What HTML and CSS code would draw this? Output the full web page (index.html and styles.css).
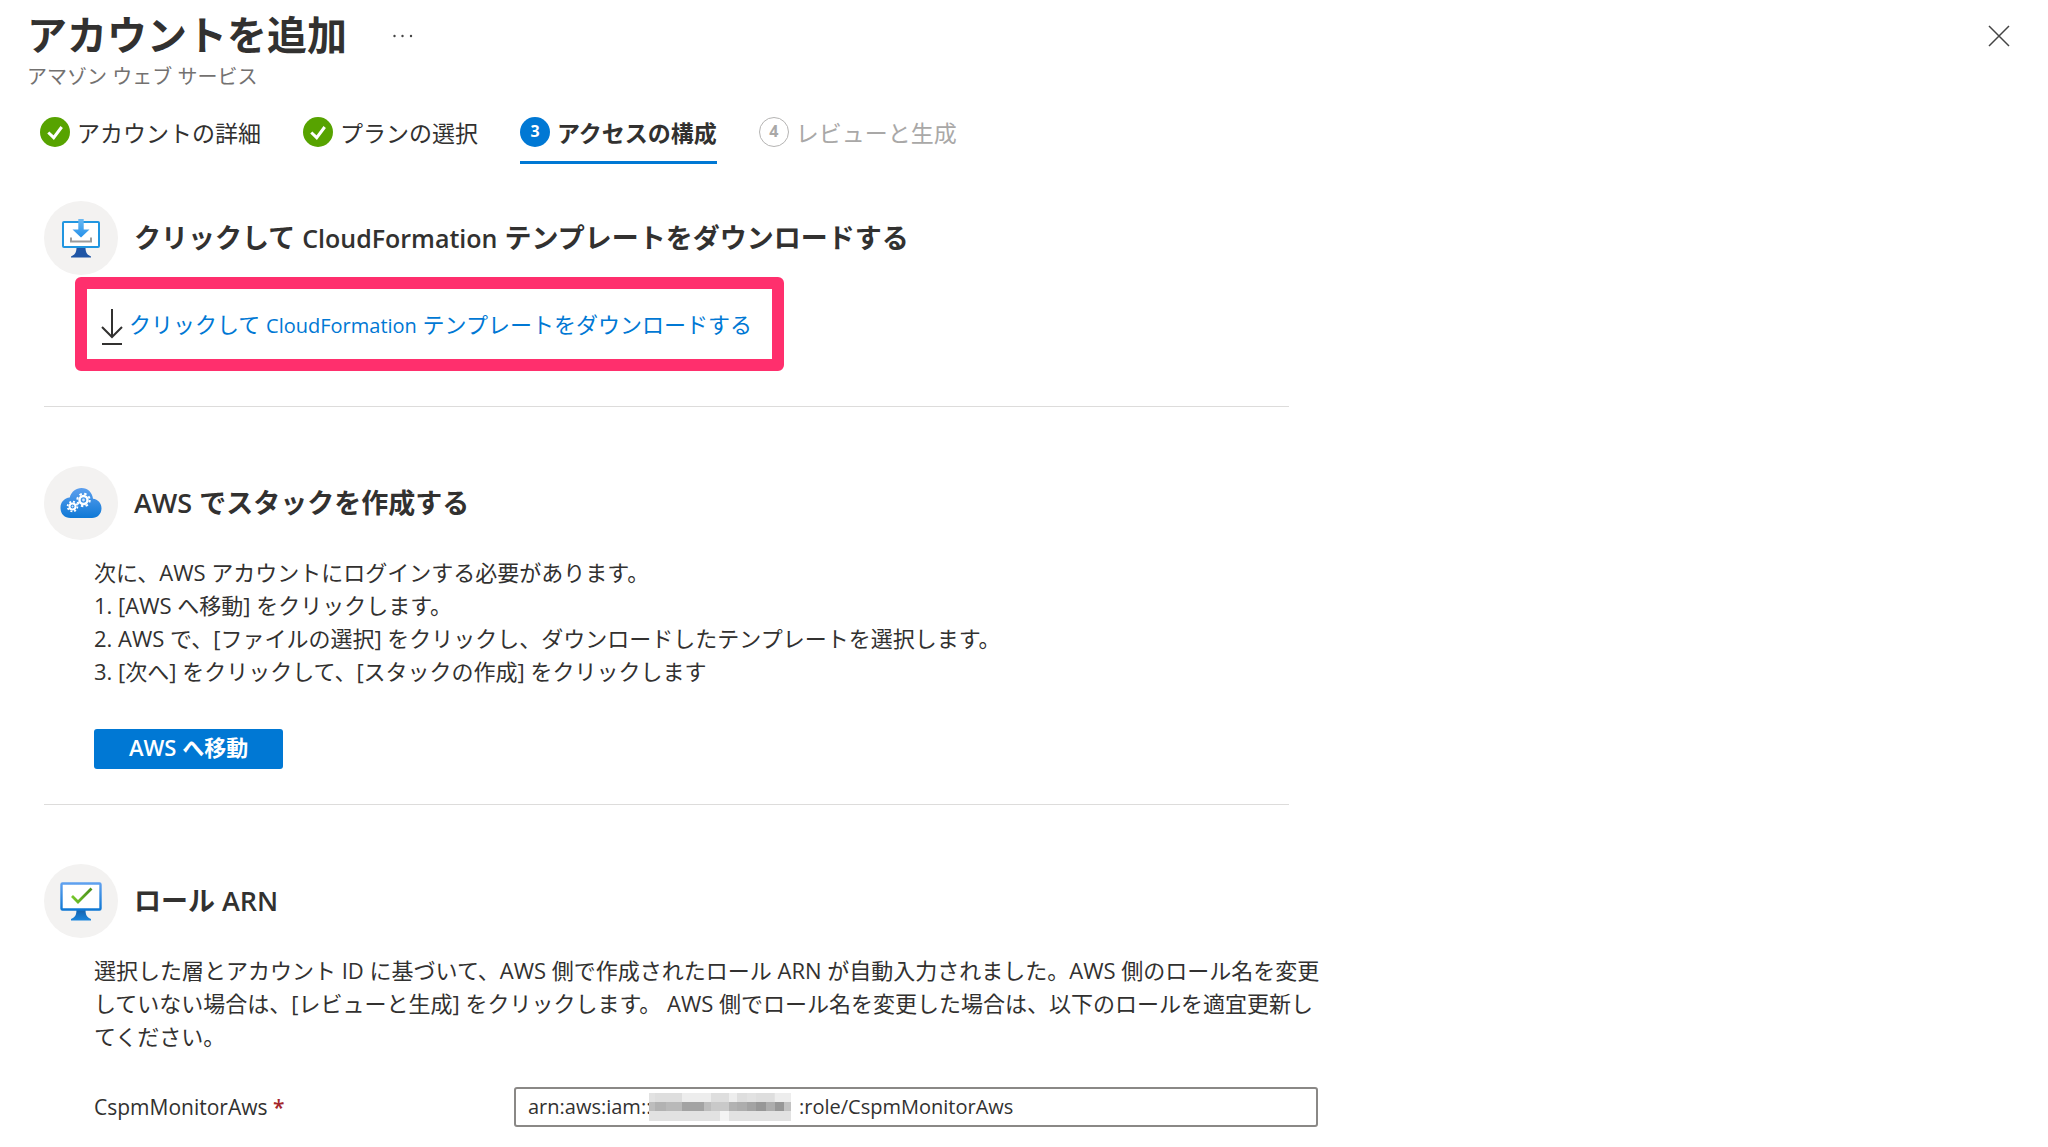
FILE: index.html
```html
<!DOCTYPE html>
<html lang="ja">
<head>
<meta charset="utf-8">
<meta name="viewport" content="width=device-width, initial-scale=1">
<title>アカウントを追加</title>
<link rel="stylesheet" href="styles.css">
</head>
<body>
<header class="blade-header">
  <div class="title-row">
    <h1 class="title">アカウントを追加</h1>
    <button class="icon-button" type="button" aria-label="その他">
      <svg width="20" height="4" viewBox="0 0 20 4" fill="#444"><circle cx="1.5" cy="2" r="1.2"/><circle cx="9.5" cy="2" r="1.2"/><circle cx="18" cy="2" r="1.2"/></svg>
    </button>
    <button class="icon-button close" type="button" aria-label="閉じる">
      <svg width="22" height="22" viewBox="0 0 22 22" stroke="#444" stroke-width="1.5"><path d="M1 1l20 20M21 1L1 21"/></svg>
    </button>
  </div>
  <p class="subtitle">アマゾン ウェブ サービス</p>
</header>

<nav class="steps">
  <a class="step" href="#details">
    <svg class="step-icon" viewBox="0 0 30 30"><circle cx="15" cy="15" r="15" fill="#57a300"/><path d="M8.300 15.500l5.400 5.200 8-10.700" fill="none" stroke="#fff" stroke-width="3"/></svg>
    <span class="step-label">アカウントの詳細</span>
  </a>
  <a class="step" href="#plan">
    <svg class="step-icon" viewBox="0 0 30 30"><circle cx="15" cy="15" r="15" fill="#57a300"/><path d="M8.300 15.500l5.400 5.200 8-10.700" fill="none" stroke="#fff" stroke-width="3"/></svg>
    <span class="step-label">プランの選択</span>
  </a>
  <a class="step current" href="#access" aria-current="step">
    <span class="step-number">3</span>
    <span class="step-label">アクセスの構成</span>
  </a>
  <a class="step pending" href="#review">
    <span class="step-number">4</span>
    <span class="step-label">レビューと生成</span>
  </a>
</nav>

<main class="content">
  <section class="section">
    <div class="section-head">
      <span class="badge">
        <svg width="38" height="40" viewBox="0 0 38 40">
          <defs>
            <linearGradient id="arrow" x1="0" y1="0" x2="0" y2="1"><stop offset="0" stop-color="#6bb9f2"/><stop offset="1" stop-color="#2390ea"/></linearGradient>
          </defs>
          <path d="M14.500 29h9c0 5 1 7.500 5.500 9.500v1H9v-1c4.500-2 5.500-4.500 5.500-9.500z" fill="#1f55a5"/>
          <rect x="1" y="4" width="36" height="25" rx="1" fill="#fff" stroke="#2196e0" stroke-width="2"/>
          <path d="M16.300 1h5.400v10.500h5.800L19 19.500l-8.500-8h5.800z" fill="url(#arrow)"/>
          <path d="M9 19.500v4h20v-4" fill="none" stroke="#9b9b9b" stroke-width="2"/>
        </svg>
      </span>
      <h2 class="heading">クリックして <span class="latin">CloudFormation</span> テンプレートをダウンロードする</h2>
    </div>
    <div class="highlight">
      <a class="download" href="#template">
        <svg width="22" height="38" viewBox="0 0 22 38" fill="none" stroke="#323130" stroke-width="2"><path d="M11 1v28M1 19l10 10 10-10M1 36h20"/></svg>
        <span>クリックして <span class="latin">CloudFormation</span> テンプレートをダウンロードする</span>
      </a>
    </div>
  </section>
  <hr class="divider">

  <section class="section">
    <div class="section-head">
      <span class="badge">
        <svg width="42" height="32" viewBox="0 0 42 32">
          <defs>
            <linearGradient id="cloud" x1="0" y1="0" x2="0" y2="1"><stop offset="0" stop-color="#5c9fee"/><stop offset="1" stop-color="#0f79d6"/></linearGradient>
          </defs>
          <path d="M10.500 31C4.500 31 .5 27 .5 20.500c0-5.500 4-9.500 9.200-10C11.500 4.500 16 1 21.500 1c6.500 0 10.800 4.600 11.500 10.800 5 .6 8.500 4.400 8.500 9.400 0 5.600-4 9.800-9.500 9.800z" fill="url(#cloud)"/>
          <g fill="none" stroke="#fff">
            <circle cx="23.500" cy="13" r="4" stroke-width="2.400"/>
            <circle cx="23.500" cy="13" r="6.200" stroke-width="2" stroke-dasharray="2.430 2.430"/>
            <circle cx="12.500" cy="19.500" r="3" stroke-width="2"/>
            <circle cx="12.500" cy="19.500" r="4.900" stroke-width="1.800" stroke-dasharray="1.920 1.920"/>
          </g>
          <circle cx="23.500" cy="13" r="1.400" fill="#cfe4fa"/>
          <circle cx="12.500" cy="19.500" r="1" fill="#cfe4fa"/>
        </svg>
      </span>
      <h2 class="heading">AWS でスタックを作成する</h2>
    </div>
    <div class="section-body">
      <p class="text">次に、AWS アカウントにログインする必要があります。<br>1. [AWS へ移動] をクリックします。<br>2. AWS で、[ファイルの選択] をクリックし、ダウンロードしたテンプレートを選択します。<br>3. [次へ] をクリックして、[スタックの作成] をクリックします</p>
      <button class="primary" type="button">AWS へ移動</button>
    </div>
  </section>
  <hr class="divider">

  <section class="section">
    <div class="section-head">
      <span class="badge">
        <svg width="42" height="40" viewBox="0 0 42 40">
          <defs>
            <linearGradient id="frame" x1="0" y1="0" x2="0" y2="1"><stop offset="0" stop-color="#5ea0ef"/><stop offset="1" stop-color="#0f78d4"/></linearGradient>
            <linearGradient id="stand" x1="0" y1="0" x2="0" y2="1"><stop offset="0" stop-color="#155fa8"/><stop offset="1" stop-color="#1b86dd"/></linearGradient>
            <linearGradient id="check" x1="0" y1="0" x2="1" y2="0"><stop offset="0" stop-color="#76c82a"/><stop offset="1" stop-color="#4a8f1c"/></linearGradient>
          </defs>
          <path d="M16.500 28h9c0 6 1 8 5.500 10v1.500H11V38c4.500-2 5.500-4 5.500-10z" fill="url(#stand)"/>
          <rect x="1.500" y="2.500" width="39" height="26" rx="1" fill="#fff" stroke="url(#frame)" stroke-width="2.400"/>
          <path d="M12 15l6 6L31.500 7.500" fill="none" stroke="url(#check)" stroke-width="2.800"/>
        </svg>
      </span>
      <h2 class="heading">ロール ARN</h2>
    </div>
    <div class="section-body">
      <p class="text">選択した層とアカウント ID に基づいて、AWS 側で作成されたロール ARN が自動入力されました。AWS 側のロール名を変更していない場合は、[レビューと生成] をクリックします。 AWS 側でロール名を変更した場合は、以下のロールを適宜更新してください。</p>
      <div class="field">
        <label class="field-label" for="role-arn">CspmMonitorAws <span class="required">*</span></label>
        <div class="field-control">
          <input class="field-input" id="role-arn" type="text" required value="arn:aws:iam::&#8199;&#8199;&#8199;&#8199;&#8199;&#8199;&#8199;&#8199;&#8199;&#8199;&#8199;&#8199;&nbsp;&nbsp;:role/CspmMonitorAws">
          <svg class="redaction" viewBox="0 0 142 28" shape-rendering="crispEdges">
            <path d="M0 0h142v28H0z" fill="#e2e2e2"/>
            <path d="M6 0h27v9H6zM62 0h18v9H62zM88 0h10v9H88zM107 0h18v9h-18z" fill="#dedede"/>
            <path d="M33 0h29v9H33zM80 0h8v9h-8zM126 0h16v9h-16z" fill="#ededed"/>
            <path d="M0 9h6v9H0zM55 9h7v9h-7z" fill="#bdbdbd"/>
            <path d="M6 9h11v9H6zM80 9h8v9h-8z" fill="#b2b2b2"/>
            <path d="M17 9h16v9H17z" fill="#b9b9b9"/>
            <path d="M33 9h22v9H33zM98 9h9v9h-9z" fill="#a3a3a3"/>
            <path d="M62 9h18v9H62z" fill="#c9c9c9"/>
            <path d="M88 9h10v9H88zM117 9h9v9h-9z" fill="#adadad"/>
            <path d="M107 9h10v9h-10zM126 9h9v9h-9z" fill="#979797"/>
            <path d="M135 9h7v9h-7z" fill="#c2c2c2"/>
            <path d="M71 18h9v10h-9z" fill="#f4f4f4"/>
          </svg>
        </div>
      </div>
    </div>
  </section>
</main>
</body>
</html>
```
FILE: styles.css
```css
* { box-sizing: border-box; }

body {
  margin: 0;
  background: #fff;
  color: #323130;
  font-family: "Open Sans", "Noto Sans CJK JP", sans-serif;
  font-size: 22px;
  line-height: 33px;
}

h1, h2, p { margin: 0; }

a { color: inherit; text-decoration: none; }

svg { display: block; flex: none; }

.blade-header { padding: 7px 38px 0 27px; }

.title-row {
  display: flex;
  align-items: center;
}

.title {
  font-size: 40px;
  line-height: 56px;
  font-weight: 700;
}

.icon-button {
  display: flex;
  align-items: center;
  justify-content: center;
  height: 32px;
  margin-left: 46px;
  padding: 2px 0 0;
  border: 0;
  background: none;
}

.close { margin-left: auto; }

.subtitle {
  color: #737170;
  font-size: 20px;
  line-height: 28px;
}

.steps {
  display: flex;
  gap: 42px;
  margin: 21px 0 0 40px;
}

.step {
  display: flex;
  align-items: center;
  gap: 7px;
  height: 52px;
  padding-bottom: 10px;
  font-size: 23px;
  border-bottom: 3px solid transparent;
}

.step-icon { width: 30px; height: 30px; }

.step-label { padding-top: 4px; }

.step-number {
  display: flex;
  align-items: center;
  justify-content: center;
  width: 30px;
  height: 30px;
  border-radius: 50%;
  font-size: 16px;
  font-weight: 700;
}

.current { font-weight: 700; border-bottom-color: #0078d4; }
.current .step-number { background: #0078d4; color: #fff; }
.pending { color: #a9a8a7; }
.pending .step-number { border: 1px solid #b5b4b3; }

.content { padding: 37px 44px 22px; }

.section { max-width: 1278px; }

.section-head {
  display: flex;
  align-items: center;
  gap: 16px;
}

.badge {
  display: flex;
  align-items: center;
  justify-content: center;
  flex: none;
  width: 74px;
  height: 74px;
  border-radius: 50%;
  background: #f3f2f1;
}

.heading {
  font-size: 27px;
  line-height: 36px;
  font-weight: 600;
}

.heading .latin { font-size: 25px; }

.highlight {
  width: fit-content;
  margin: 2px 0 0 31px;
  padding: 19px 20px 10px 14px;
  border: 12px solid #ff2f6d;
  border-radius: 6px;
}

.download {
  display: flex;
  align-items: flex-start;
  gap: 6px;
  height: 41px;
  color: #0078d4;
}

.download .latin { font-size: 20px; }

.divider {
  max-width: 1245px;
  height: 1px;
  margin: 35px 0 59px;
  border: 0;
  background: #dddcdb;
}

.section-body { padding: 16px 0 0 50px; }

.primary {
  display: block;
  height: 40px;
  margin-top: 41px;
  padding: 0 35px 3px;
  border: 0;
  border-radius: 3px;
  background: #0078d4;
  color: #fff;
  font: inherit;
  font-weight: 600;
}

.field {
  display: flex;
  align-items: center;
  margin-top: 34px;
}

.field-label {
  flex: 0 0 420px;
  font-size: 21px;
}

.required { color: #a4262c; font-weight: 600; }

.field-control {
  position: relative;
  flex: 1;
  max-width: 804px;
}

.field-input {
  display: block;
  width: 100%;
  height: 40px;
  padding: 0 12px 2px;
  border: 2px solid #8a8886;
  border-radius: 3px;
  background: #fff;
  color: inherit;
  font: inherit;
  font-size: 20px;
}

.redaction {
  position: absolute;
  top: 6px;
  left: 135px;
  width: 142px;
  height: 28px;
}
```
